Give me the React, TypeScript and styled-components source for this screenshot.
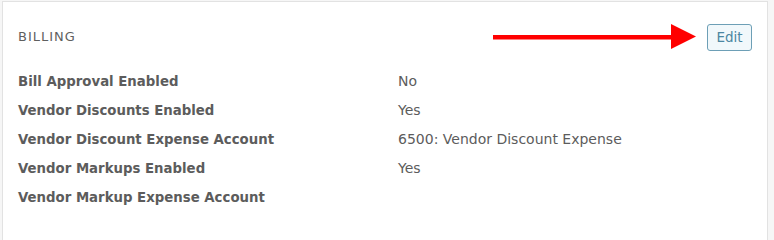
import React from "react";
import styled, { createGlobalStyle } from "styled-components";

const Global = createGlobalStyle`
  html, body { margin: 0; padding: 0; background: #f6f6f6; }
  body { font-family: "DejaVu Sans", "Open Sans", sans-serif; }
`;

const Page = styled.div`
  padding: 1px 6px 0 2px;
  height: 239px;
  overflow: hidden;
`;

const Card = styled.section`
  background: #ffffff;
  border: 1px solid #e2e2e2;
  border-bottom: none;
  height: 260px;
  padding: 21px 15px 0 15px;
  box-sizing: border-box;
`;

const Header = styled.div`
  display: flex;
  align-items: center;
  justify-content: space-between;
  height: 28px;
`;

const Title = styled.h2`
  margin: 0;
  margin-top: -2px;
  font-size: 13px;
  font-weight: 400;
  color: #5f5f5f;
  letter-spacing: 1px;
`;

const Actions = styled.div`
  display: flex;
  align-items: center;
  gap: 11px;
`;

const EditButton = styled.button`
  font-family: inherit;
  font-size: 13.5px;
  color: #4b86a1;
  background: #f1f8fb;
  border: 1px solid #6d9fb6;
  border-radius: 3px;
  width: 45px;
  height: 27px;
  padding: 0;
  cursor: pointer;
`;

const Rows = styled.dl`
  margin: 16px 0 0 0;
  display: grid;
  grid-template-columns: 380px 1fr;
  row-gap: 0;
`;

const Label = styled.dt`
  font-size: 13.3px;
  font-weight: 700;
  color: #5c5c5c;
  height: 29px;
  line-height: 29px;
`;

const Value = styled.dd`
  margin: 0;
  font-size: 14px;
  color: #5c5c5c;
  height: 29px;
  line-height: 29px;
`;

const Arrow = () => (
  <svg width="203" height="26" viewBox="0 0 203 26" aria-hidden>
    <rect x="0" y="11" width="180" height="4.5" fill="#ff0000" />
    <polygon points="178,0 203,12.5 178,25" fill="#ff0000" />
  </svg>
);

const rows: [string, string][] = [
  ["Bill Approval Enabled", "No"],
  ["Vendor Discounts Enabled", "Yes"],
  ["Vendor Discount Expense Account", "6500: Vendor Discount Expense"],
  ["Vendor Markups Enabled", "Yes"],
  ["Vendor Markup Expense Account", ""],
];

export default function App() {
  return (
    <>
      <Global />
      <Page>
        <Card>
          <Header>
            <Title>BILLING</Title>
            <Actions>
              <Arrow />
              <EditButton>Edit</EditButton>
            </Actions>
          </Header>
          <Rows>
            {rows.map(([l, v]) => (
              <React.Fragment key={l}>
                <Label>{l}</Label>
                <Value>{v}</Value>
              </React.Fragment>
            ))}
          </Rows>
        </Card>
      </Page>
    </>
  );
}
